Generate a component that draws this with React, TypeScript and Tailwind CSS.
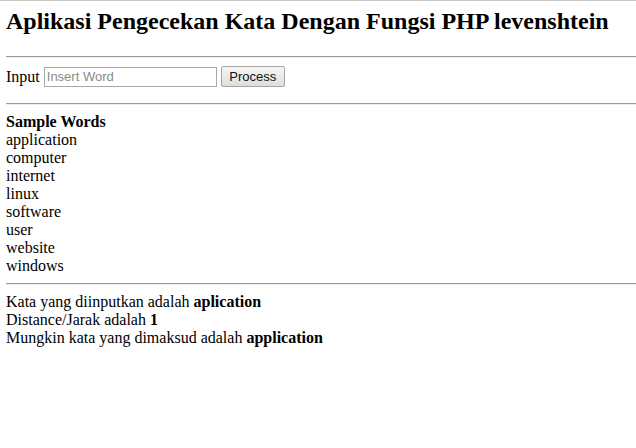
import React from "react";

const words = ["application", "computer", "internet", "linux", "software", "user", "website", "windows"];

const Rule = () => <hr className="border-0 border-t border-t-[#9a9a9a] border-b border-b-[#eeeeee] h-0" />;

export default function App() {
  return (
    <div className="min-h-[448px] bg-white border-t border-[#c8c8c8] pl-[6px] text-black text-[16px] leading-[18px] font-['Liberation_Serif',serif]">
      <h2 className="mt-[7px] text-[24px] leading-[27px] font-bold">
        Aplikasi Pengecekan Kata Dengan Fungsi PHP levenshtein
      </h2>
      <div className="mt-[21px]">
        <Rule />
      </div>

      <form className="mt-[8px] flex items-center h-[21px]" onSubmit={(e) => e.preventDefault()}>
        <span>Input</span>
        <input
          type="text"
          placeholder="Insert Word"
          className="ml-[4px] w-[173px] h-[20px] px-[2px] border border-[#a9a9a9] bg-white text-[13px] font-['Liberation_Sans',sans-serif] placeholder:text-[#8a8a8a] outline-none"
        />
        <button
          type="submit"
          className="ml-[4px] w-[64px] h-[21px] border border-[#a6a6a6] rounded-[2px] bg-gradient-to-b from-[#f6f6f6] to-[#dedede] text-[13px] text-[#111] font-['Liberation_Sans',sans-serif]"
        >
          Process
        </button>
      </form>

      <div className="mt-[16px]">
        <Rule />
      </div>

      <div className="mt-[8px]">
        <div className="font-bold">Sample Words</div>
        {words.map((w) => (
          <div key={w}>{w}</div>
        ))}
      </div>

      <div className="mt-[8px]">
        <Rule />
      </div>

      <div className="mt-[8px]">
        <div>
          Kata yang diinputkan adalah <b>aplication</b>
        </div>
        <div>
          Distance/Jarak adalah <b>1</b>
        </div>
        <div>
          Mungkin kata yang dimaksud adalah <b>application</b>
        </div>
      </div>
    </div>
  );
}
